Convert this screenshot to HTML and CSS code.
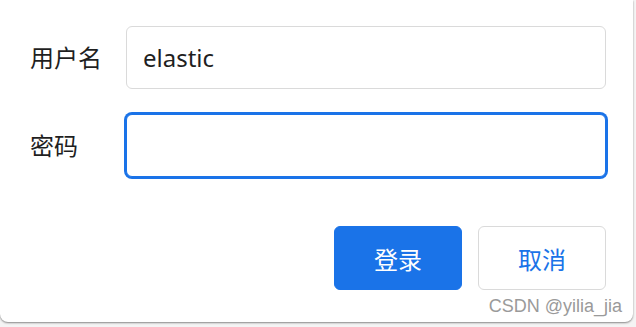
FILE: index.html
```html
<!DOCTYPE html>
<html lang="zh">
<head>
<meta charset="utf-8">
<link rel="stylesheet" href="styles.css">
</head>
<body>
<div class="dialog">
  <form class="form">
    <label class="label" for="user">用户名</label>
    <input class="input" id="user" type="text" value="elastic">
    <label class="label" for="pwd">密码</label>
    <input class="input input-focus" id="pwd" type="password" value="">
  </form>
  <div class="actions">
    <button class="btn btn-primary" type="button">登录</button>
    <button class="btn btn-default" type="button">取消</button>
  </div>
  <div class="watermark">CSDN @yilia_jia</div>
</div>
</body>
</html>
```
FILE: styles.css
```css
html, body {
  margin: 0;
  padding: 0;
  background: #f4f4f4;
}
body {
  width: 636px;
  height: 327px;
  overflow: hidden;
  font-family: "Noto Sans", "Noto Sans CJK SC", sans-serif;
  color: #1f1f1f;
}
.dialog {
  position: relative;
  box-sizing: border-box;
  width: 633px;
  height: 322px;
  background: #fff;
  border-radius: 0 0 8px 8px;
  box-shadow: 0 1px 2px rgba(0, 0, 0, 0.45);
  padding: 26px 27px 0 30px;
}
.form {
  display: grid;
  grid-template-columns: 96px 480px;
  row-gap: 25px;
  align-items: center;
  margin: 0;
}
.label {
  font-size: 24px;
  line-height: 30px;
  color: #1f1f1f;
}
.input {
  box-sizing: border-box;
  width: 480px;
  height: 63px;
  border: 1px solid #dadada;
  border-radius: 6px;
  padding: 0 16px;
  font-family: "Noto Sans", "Noto Sans CJK SC", sans-serif;
  font-size: 24px;
  color: #1f1f1f;
  background: #fff;
  outline: none;
}
.input-focus {
  border-color: #1a73e8;
  box-shadow: 0 0 0 2px #1a73e8;
}
.actions {
  display: flex;
  justify-content: flex-end;
  gap: 16px;
  margin-top: 49px;
}
.btn {
  box-sizing: border-box;
  width: 128px;
  height: 64px;
  border-radius: 6px;
  font-family: "Noto Sans CJK SC", sans-serif;
  font-size: 24px;
  padding: 0;
  cursor: pointer;
}
.btn-primary {
  background: #1a73e8;
  border: 1px solid #1a73e8;
  color: #fff;
}
.btn-default {
  background: #fff;
  border: 1px solid #dadada;
  color: #1a73e8;
}
.watermark {
  position: absolute;
  right: 11px;
  top: 296px;
  font-family: "Liberation Sans", Arial, sans-serif;
  font-size: 18px;
  line-height: 20px;
  color: #9a9a9a;
}
```
